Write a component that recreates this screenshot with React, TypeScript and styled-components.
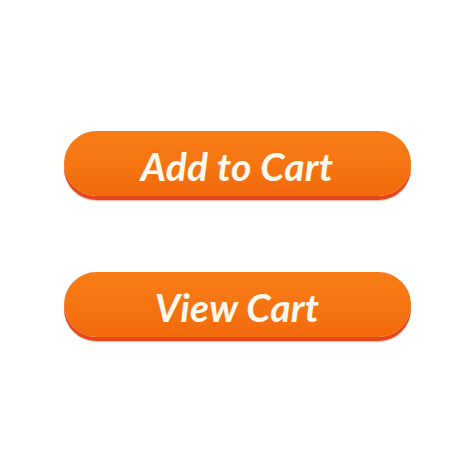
import React from "react";
import styled, { createGlobalStyle } from "styled-components";

const GlobalStyle = createGlobalStyle`
  html, body {
    margin: 0;
    padding: 0;
    background: #ffffff;
  }
`;

const Page = styled.div`
  width: 474px;
  height: 474px;
  display: flex;
  flex-direction: column;
  align-items: center;
  padding-top: 131px;
  gap: 76px;
  box-sizing: border-box;
`;

const CartButton = styled.button`
  width: 347px;
  height: 65px;
  border: none;
  border-radius: 33px;
  background: linear-gradient(180deg, #f77c16 0%, #f57411 55%, #f26a0d 100%);
  box-shadow: 0 4px 0 #e5471a, 0 5px 1px rgba(200, 60, 20, 0.35);
  display: flex;
  align-items: center;
  justify-content: center;
  padding: 5px 0 0;
  cursor: pointer;
  font-family: "Lato", "Open Sans", sans-serif;
  font-style: italic;
  font-weight: 700;
  font-size: 39px;
  letter-spacing: 0.2px;
  color: #fff9f0;
`;

export default function App() {
  return (
    <>
      <GlobalStyle />
      <Page>
        <CartButton>Add to Cart</CartButton>
        <CartButton>View Cart</CartButton>
      </Page>
    </>
  );
}
